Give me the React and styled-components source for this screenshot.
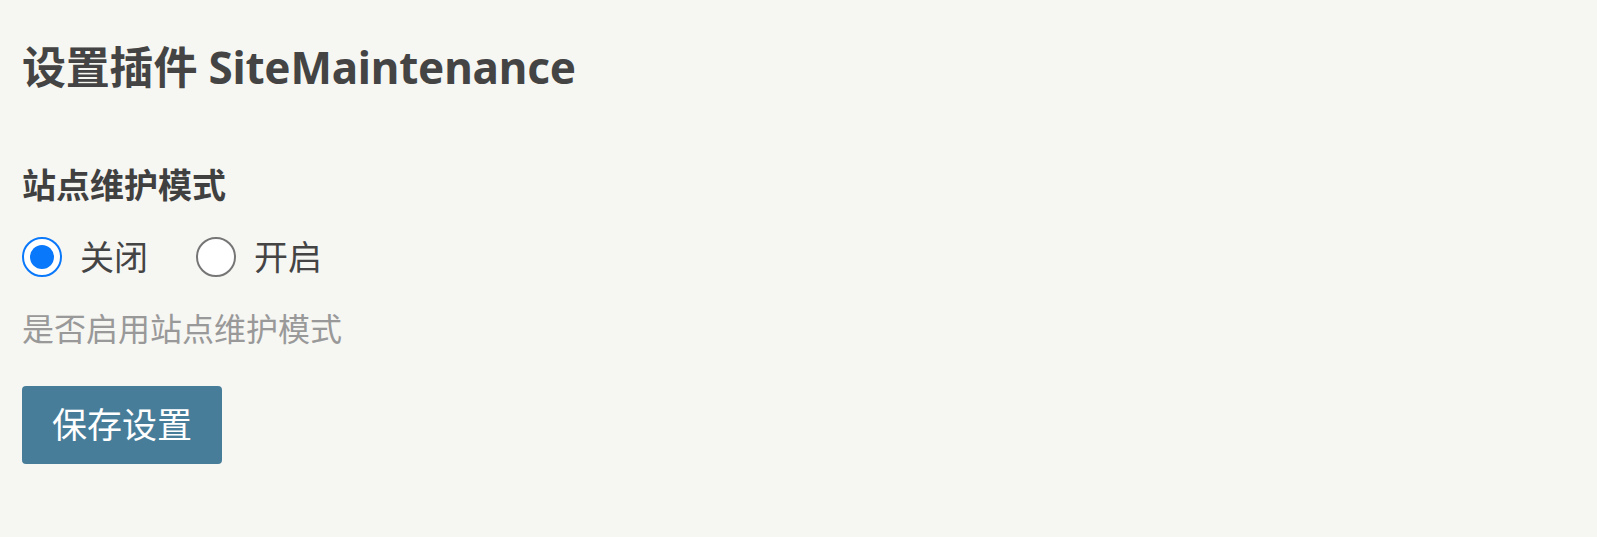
import React, { useState } from 'react';
import styled, { createGlobalStyle } from 'styled-components';

const GlobalStyle = createGlobalStyle`
  html, body {
    margin: 0;
    padding: 0;
    background: #f6f6f2;
  }
  body {
    font-family: "Noto Sans", "Noto Sans CJK SC", sans-serif;
    color: #444;
  }
`;

const Page = styled.div`
  padding: 37px 22px 40px;
`;

const Title = styled.h1`
  margin: 0;
  font-size: 44px;
  line-height: 60px;
  font-weight: 700;
  color: #444;
  letter-spacing: -0.2px;
`;

const Section = styled.div`
  margin-top: 65px;
`;

const SectionTitle = styled.h3`
  margin: 0;
  font-size: 34px;
  line-height: 46px;
  font-weight: 700;
  color: #404040;
`;

const RadioGroup = styled.div`
  display: flex;
  align-items: center;
  gap: 48px;
  margin-top: 29px;
  height: 40px;
`;

const RadioLabel = styled.label`
  display: flex;
  align-items: center;
  gap: 18px;
  font-size: 34px;
  line-height: 40px;
  color: #444;
  cursor: pointer;
`;

const RadioCircle = styled.span`
  box-sizing: border-box;
  width: 40px;
  height: 40px;
  border-radius: 50%;
  background: #fff;
  border: 2px solid ${p => (p.checked ? '#0a78fa' : '#767676')};
  display: flex;
  align-items: center;
  justify-content: center;
  &::after {
    content: '';
    width: 24px;
    height: 24px;
    border-radius: 50%;
    background: #0a78fa;
    display: ${p => (p.checked ? 'block' : 'none')};
  }
`;

const HiddenInput = styled.input`
  display: none;
`;

const Description = styled.p`
  margin: 30px 0 0;
  font-size: 32px;
  line-height: 44px;
  color: #999;
`;

const SaveButton = styled.button`
  display: block;
  box-sizing: border-box;
  margin-top: 35px;
  height: 78px;
  padding: 0 30px;
  border: none;
  border-radius: 4px;
  background: #477d99;
  color: #fff;
  font-family: inherit;
  font-size: 35px;
  line-height: 78px;
  cursor: pointer;
`;

const options = [
  { value: 'off', label: '关闭' },
  { value: 'on', label: '开启' },
];

const App = () => {
  const [mode, setMode] = useState('off');
  return (
    <Page>
      <GlobalStyle />
      <Title>设置插件 SiteMaintenance</Title>
      <Section>
        <SectionTitle>站点维护模式</SectionTitle>
        <RadioGroup>
          {options.map(o => (
            <RadioLabel key={o.value}>
              <HiddenInput
                type="radio"
                name="maintenance"
                checked={mode === o.value}
                onChange={() => setMode(o.value)}
              />
              <RadioCircle checked={mode === o.value} />
              {o.label}
            </RadioLabel>
          ))}
        </RadioGroup>
        <Description>是否启用站点维护模式</Description>
      </Section>
      <SaveButton>保存设置</SaveButton>
    </Page>
  );
};

export default App;
